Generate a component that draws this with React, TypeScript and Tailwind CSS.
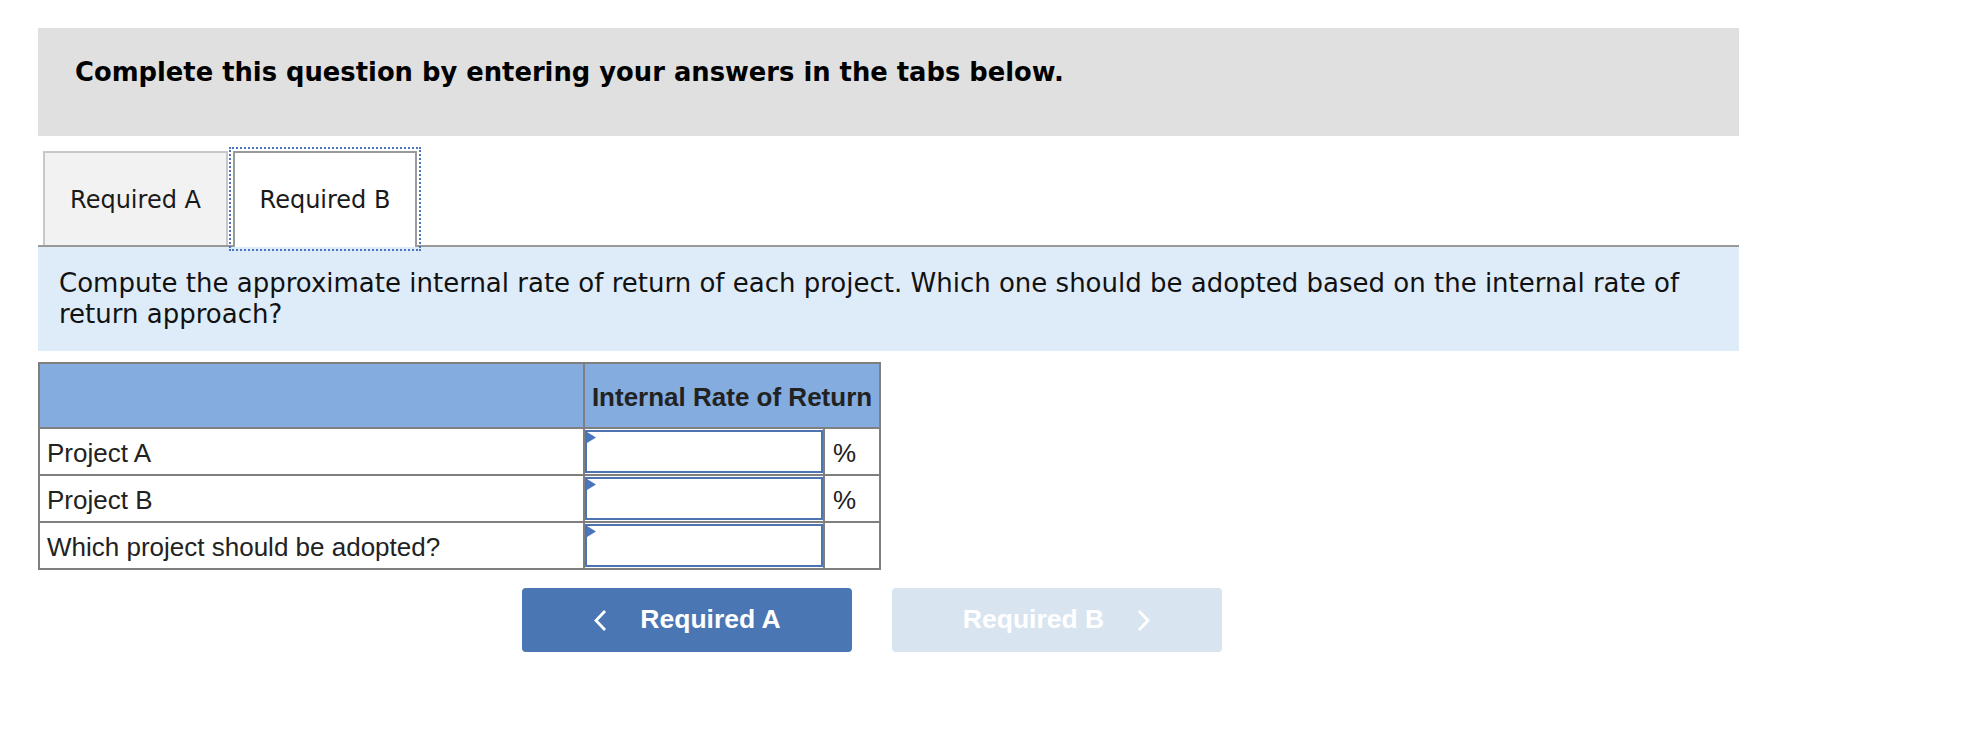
export default function App() {
  const rows = [
    { label: "Project A", unit: "%" },
    { label: "Project B", unit: "%" },
    { label: "Which project should be adopted?", unit: "" },
  ];

  return (
    <div className="min-h-[734px] w-[1972px] bg-white pl-[38px] pt-[28px]">
      <div className="w-[1701px]">
        {/* Instructions */}
        <div className="h-[108px] bg-[#e0e0e0] pl-[37px] pt-[28px]">
          <h2 className="font-['DejaVu_Sans',Verdana,sans-serif] text-[25.8px] font-bold leading-[32px] text-black">
            Complete this question by entering your answers in the tabs below.
          </h2>
        </div>

        {/* Tabs */}
        <div className="mt-[15px] flex items-end gap-[5px] border-b-2 border-[#999999] pl-[5px]">
          <button
            type="button"
            className="h-[94px] w-[185px] border-2 border-b-0 border-[#c8c8c8] bg-[#f2f2f2] pt-[2px] font-['DejaVu_Sans',Verdana,sans-serif] text-[24px] text-[#1a1a1a]"
          >
            Required A
          </button>
          <button
            type="button"
            className="relative z-10 -mb-[2px] h-[96px] w-[184px] border-2 border-b-0 border-[#9a9a9a] bg-white font-['DejaVu_Sans',Verdana,sans-serif] text-[24px] text-[#1a1a1a] outline-[2.5px] outline-offset-2 outline-dotted outline-[#4a74c0]"
          >
            Required B
          </button>
        </div>

        {/* Question */}
        <div className="h-[104px] bg-[#deebf8] pl-[21px] pr-[21px] pt-[21px]">
          <p className="font-['DejaVu_Sans',Verdana,sans-serif] text-[26px] leading-[31px] text-[#111111]">
            Compute the approximate internal rate of return of each project. Which one should be adopted based on the
            internal rate of return approach?
          </p>
        </div>

        {/* Answer table */}
        <table className="mt-[11px] w-[843px] border-collapse font-['Liberation_Sans',Arial,sans-serif] text-[26px] text-[#222222]">
          <colgroup>
            <col className="w-[547px]" />
            <col className="w-[240px]" />
            <col className="w-[56px]" />
          </colgroup>
          <thead>
            <tr className="h-[65px] bg-[#84acdf]">
              <th className="border-2 border-[#7f7f7f]"></th>
              <th colSpan={2} className="border-2 border-[#7f7f7f] px-0 pt-[4px] text-center font-bold whitespace-nowrap">
                Internal Rate of Return
              </th>
            </tr>
          </thead>
          <tbody>
            {rows.map((row) => (
              <tr key={row.label} className="h-[47px]">
                <td className="border-2 border-[#7f7f7f] pl-[7px] pt-[3px] text-left font-normal leading-none">
                  {row.label}
                </td>
                <td className="border-2 border-[#7f7f7f] p-0">
                  <div className="relative h-[43px] w-full border-2 border-[#4d73b3] bg-white">
                    <svg className="absolute left-0 top-0" width="10" height="12" viewBox="0 0 10 12">
                      <polygon points="0,0 9,5.5 0,11" fill="#4a76c0" />
                    </svg>
                  </div>
                </td>
                <td className="border-2 border-[#7f7f7f] pl-[8px] pt-[3px] leading-none">{row.unit}</td>
              </tr>
            ))}
          </tbody>
        </table>

        {/* Navigation */}
        <div className="ml-[484px] mt-[18px] flex gap-[40px] font-['Liberation_Sans',Arial,sans-serif] text-[26.5px] font-bold text-white">
          <button
            type="button"
            className="flex h-[64px] w-[330px] items-center justify-center gap-[33px] rounded-[4px] bg-[#4a76b4]"
          >
            <svg width="14" height="23" viewBox="0 0 14 23" fill="none">
              <polyline points="12,2 3,11.5 12,21" stroke="white" strokeWidth="2.8" />
            </svg>
            <span>Required A</span>
          </button>
          <button
            type="button"
            disabled
            className="flex h-[64px] w-[330px] items-center justify-center gap-[33px] rounded-[4px] bg-[#d9e4f1]"
          >
            <span>Required B</span>
            <svg width="14" height="23" viewBox="0 0 14 23" fill="none">
              <polyline points="2,2 11,11.5 2,21" stroke="white" strokeWidth="2.8" />
            </svg>
          </button>
        </div>
      </div>
    </div>
  );
}
